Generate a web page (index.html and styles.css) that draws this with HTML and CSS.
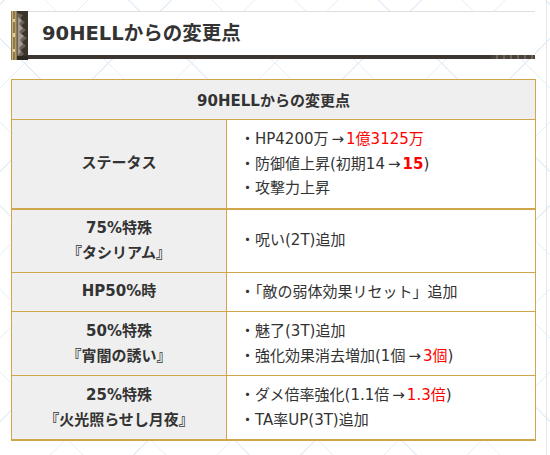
FILE: index.html
```html
<!DOCTYPE html>
<html lang="ja">
<head>
<meta charset="utf-8">
<link rel="stylesheet" href="styles.css">
</head>
<body>
<div class="page">
  <div class="heading">
    <div class="ornament">
      <svg width="17" height="49" viewBox="0 0 17 49">
        <rect x="0" y="0" width="17" height="49" fill="#3b342c"/>
        <rect x="0" y="0" width="6" height="49" fill="#8c7a4e"/>
        <rect x="1" y="0" width="1" height="49" fill="#c9b27a"/>
        <rect x="4" y="0" width="1" height="49" fill="#b59c60"/>
        <rect x="2" y="8" width="2" height="3" fill="#e0cf9a"/>
        <rect x="2" y="22" width="2" height="4" fill="#e0cf9a"/>
        <rect x="2" y="38" width="2" height="3" fill="#e0cf9a"/>
        <path d="M6 2 L12 4 L9 8 L14 11 L10 15 L15 19 L10 23 L16 27 L11 31 L15 35 L10 39 L13 43 L8 47 L6 47 Z" fill="#6a625a"/>
        <path d="M7 6 L11 9 L8 13 L12 17 L8 21 L13 25 L9 29 L12 33 L8 37 L10 41 L7 44 Z" fill="#a39a90"/>
        <rect x="6" y="45" width="11" height="4" fill="#2e2823"/>
      </svg>
    </div>
    <div class="heading-main">
      <h2 class="heading-title">90HELLからの変更点</h2>
    </div>
  </div>

  <table class="changes">
    <thead>
      <tr><th colspan="2" class="head-cell">90HELLからの変更点</th></tr>
    </thead>
    <tbody>
      <tr class="thick">
        <th class="label">ステータス</th>
        <td class="desc">
          <div>・HP4200万<span class="arrow">→</span><span class="red">1億3125万</span></div>
          <div>・防御値上昇(初期14<span class="arrow">→</span><b class="red">15</b>)</div>
          <div>・攻撃力上昇</div>
        </td>
      </tr>
      <tr>
        <th class="label">75%特殊<br>『タシリアム』</th>
        <td class="desc"><div>・呪い(2T)追加</div></td>
      </tr>
      <tr>
        <th class="label">HP50%時</th>
        <td class="desc"><div>・「敵の弱体効果リセット」追加</div></td>
      </tr>
      <tr>
        <th class="label">50%特殊<br>『宵闇の誘い』</th>
        <td class="desc">
          <div>・魅了(3T)追加</div>
          <div>・強化効果消去増加(1個<span class="arrow">→</span><span class="red">3個</span>)</div>
        </td>
      </tr>
      <tr class="last">
        <th class="label">25%特殊<br>『火光照らせし月夜』</th>
        <td class="desc">
          <div>・ダメ倍率強化(1.1倍<span class="arrow">→</span><span class="red">1.3倍</span>)</div>
          <div>・TA率UP(3T)追加</div>
        </td>
      </tr>
    </tbody>
  </table>
</div>
</body>
</html>
```

FILE: styles.css
```css
html, body {
  margin: 0;
  padding: 0;
}
body {
  width: 550px;
  height: 455px;
  overflow: hidden;
  font-family: "DejaVu Sans", "Noto Sans CJK JP", sans-serif;
  color: #333;
  background-color: #fff;
  background-image:
    repeating-linear-gradient(45deg, transparent 0 58px, #e6eff7 58px 59px),
    repeating-linear-gradient(-45deg, transparent 0 58px, #e6eff7 58px 59px);
}
.page {
  width: 547px;
  height: 455px;
  box-sizing: border-box;
  border-right: 1px solid #e4e6e8;
  padding: 11px 0 0 11px;
}
.heading {
  display: flex;
  width: 524px;
  height: 49px;
}
.ornament {
  width: 17px;
  height: 49px;
  flex: none;
  line-height: 0;
}
.heading-main {
  flex: 1;
  height: 48px;
  box-sizing: border-box;
  background: #fff;
  border-top: 1px solid #dcdfe2;
  border-bottom: 4px solid #3d3630;
  display: flex;
  align-items: center;
  padding-left: 14px;
  position: relative;
}
.heading-main::after {
  content: "";
  position: absolute;
  right: 0;
  bottom: -4px;
  width: 44px;
  height: 4px;
  background: repeating-linear-gradient(90deg, #4a433c 0 5px, #6e665e 5px 7px);
}
.heading-title {
  margin: 0;
  font-size: 19.5px;
  font-weight: bold;
  color: #333;
  line-height: 1;
}
.changes {
  margin-top: 19px;
  width: 525px;
  border-collapse: collapse;
  border: 1px solid #d1a54c;
  font-size: 15px;
  background: #fff;
}
.changes th, .changes td {
  border: 1px solid #d1a54c;
  padding: 0;
}
.head-cell {
  background: #efefef;
  height: 39px;
  font-weight: bold;
  text-align: center;
}
.label {
  width: 214px;
  background: #efefef;
  font-weight: bold;
  text-align: center;
  line-height: 25px;
  padding: 6px 0 !important;
}
.desc {
  padding: 7px 0 7px 13px !important;
  line-height: 24.5px;
  vertical-align: middle;
}
.arrow {
  margin: 0 2px 0 3px;
}
.thick th, .thick td {
  border-bottom-width: 2px;
}
.last th, .last td {
  border-bottom-width: 2px;
}
.red {
  color: #ff0000;
}
b.red {
  font-weight: bold;
}
```
